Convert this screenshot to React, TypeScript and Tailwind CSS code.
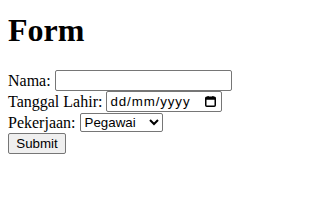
import React from "react";

export default function App() {
  return (
    <div className="bg-white text-black p-2 min-h-[209px] font-['Liberation_Serif','Times_New_Roman',serif]">
      <h1 className="text-[32px] font-bold mt-[4px] mb-[21.44px] leading-[normal]">Form</h1>
      <form className="text-[16px] leading-[normal]">
        <div className="flex items-center gap-[4px] h-[21px]">
          <span>Nama:</span>
          <input
            type="text"
            className="w-[177px] h-[21px] border border-[#767676] rounded-[2px] px-[2px] py-[1px] text-[13.33px] bg-white font-['Liberation_Sans',Arial,sans-serif]"
          />
        </div>
        <div className="flex items-center gap-[4px] h-[21px]">
          <span>Tanggal Lahir:</span>
          <div className="w-[116px] h-[21px] border border-[#767676] rounded-[2px] pl-[3px] pr-[5px] bg-white flex items-center justify-between text-[13.33px] font-['Liberation_Sans',Arial,sans-serif]">
            <span className="tracking-[0.9px]">dd/mm/yyyy</span>
            <svg width="11" height="11" viewBox="0 0 11 11" className="shrink-0">
              <rect x="0.75" y="1.25" width="9.5" height="9" rx="1" fill="none" stroke="#000" strokeWidth="1.5" />
              <rect x="0.75" y="1.25" width="9.5" height="2.5" fill="#000" />
              <rect x="2.5" y="0" width="1.2" height="2" fill="#000" />
              <rect x="7.3" y="0" width="1.2" height="2" fill="#000" />
            </svg>
          </div>
        </div>
        <div className="flex items-center gap-[4px] h-[21px]">
          <span>Pekerjaan:</span>
          <select
            className="w-[83px] h-[19px] border border-[#767676] rounded-[2px] text-[13.33px] bg-white font-['Liberation_Sans',Arial,sans-serif]"
            defaultValue="Pegawai"
          >
            <option>Pegawai</option>
          </select>
        </div>
        <div className="flex items-center h-[21px]">
          <button
            type="button"
            className="w-[58px] h-[21px] border border-[#767676] rounded-[2px] px-[6px] py-[1px] text-[13.33px] bg-[#efefef] font-['Liberation_Sans',Arial,sans-serif]"
          >
            Submit
          </button>
        </div>
      </form>
    </div>
  );
}
